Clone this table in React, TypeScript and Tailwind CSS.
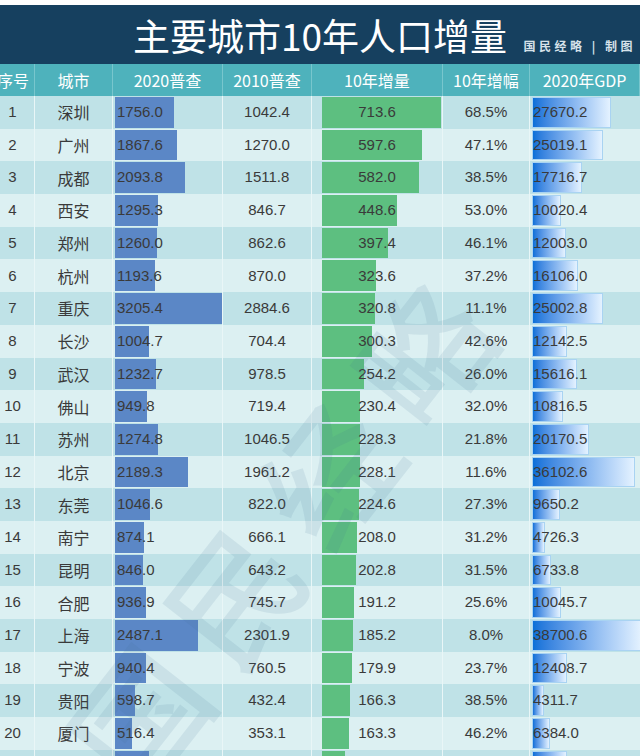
import React from "react";

type Row = {
  no: number;
  city: string;
  pop2020: string;
  pop2010: string;
  inc: string;
  rate: string;
  gdp: string;
};

const rows: Row[] = [
  { no: 1, city: "深圳", pop2020: "1756.0", pop2010: "1042.4", inc: "713.6", rate: "68.5%", gdp: "27670.2" },
  { no: 2, city: "广州", pop2020: "1867.6", pop2010: "1270.0", inc: "597.6", rate: "47.1%", gdp: "25019.1" },
  { no: 3, city: "成都", pop2020: "2093.8", pop2010: "1511.8", inc: "582.0", rate: "38.5%", gdp: "17716.7" },
  { no: 4, city: "西安", pop2020: "1295.3", pop2010: "846.7", inc: "448.6", rate: "53.0%", gdp: "10020.4" },
  { no: 5, city: "郑州", pop2020: "1260.0", pop2010: "862.6", inc: "397.4", rate: "46.1%", gdp: "12003.0" },
  { no: 6, city: "杭州", pop2020: "1193.6", pop2010: "870.0", inc: "323.6", rate: "37.2%", gdp: "16106.0" },
  { no: 7, city: "重庆", pop2020: "3205.4", pop2010: "2884.6", inc: "320.8", rate: "11.1%", gdp: "25002.8" },
  { no: 8, city: "长沙", pop2020: "1004.7", pop2010: "704.4", inc: "300.3", rate: "42.6%", gdp: "12142.5" },
  { no: 9, city: "武汉", pop2020: "1232.7", pop2010: "978.5", inc: "254.2", rate: "26.0%", gdp: "15616.1" },
  { no: 10, city: "佛山", pop2020: "949.8", pop2010: "719.4", inc: "230.4", rate: "32.0%", gdp: "10816.5" },
  { no: 11, city: "苏州", pop2020: "1274.8", pop2010: "1046.5", inc: "228.3", rate: "21.8%", gdp: "20170.5" },
  { no: 12, city: "北京", pop2020: "2189.3", pop2010: "1961.2", inc: "228.1", rate: "11.6%", gdp: "36102.6" },
  { no: 13, city: "东莞", pop2020: "1046.6", pop2010: "822.0", inc: "224.6", rate: "27.3%", gdp: "9650.2" },
  { no: 14, city: "南宁", pop2020: "874.1", pop2010: "666.1", inc: "208.0", rate: "31.2%", gdp: "4726.3" },
  { no: 15, city: "昆明", pop2020: "846.0", pop2010: "643.2", inc: "202.8", rate: "31.5%", gdp: "6733.8" },
  { no: 16, city: "合肥", pop2020: "936.9", pop2010: "745.7", inc: "191.2", rate: "25.6%", gdp: "10045.7" },
  { no: 17, city: "上海", pop2020: "2487.1", pop2010: "2301.9", inc: "185.2", rate: "8.0%", gdp: "38700.6" },
  { no: 18, city: "宁波", pop2020: "940.4", pop2010: "760.5", inc: "179.9", rate: "23.7%", gdp: "12408.7" },
  { no: 19, city: "贵阳", pop2020: "598.7", pop2010: "432.4", inc: "166.3", rate: "38.5%", gdp: "4311.7" },
  { no: 20, city: "厦门", pop2020: "516.4", pop2010: "353.1", inc: "163.3", rate: "46.2%", gdp: "6384.0" },
  { no: 21, city: "青岛", pop2020: "1007.2", pop2010: "871.5", inc: "135.7", rate: "15.6%", gdp: "12400.6" },
];

const cols = "grid grid-cols-[35px_78px_110px_89px_131px_87px_110px]";
const num = "font-['Liberation_Sans',Arial,sans-serif] text-[15px] text-[#3a3a3a]";
const cjk = "font-['Noto_Sans_CJK_SC','Noto_Sans',sans-serif]";
const divider = "border-r border-[#e9f6f7]";

export default function App() {
  return (
    <div className="relative w-[640px] h-[756px] overflow-hidden bg-white">
      <div className="h-[5px]" />

      {/* 标题 */}
      <div className="h-[59px] bg-[#16405f] grid grid-cols-[1fr_auto_1fr] items-center">
        <div />
        <h1 className={`${cjk} text-[37px] font-normal text-white leading-none pt-[1px]`}>
          主要城市10年人口增量
        </h1>
        <div className="flex justify-end self-end pb-[9px] pr-[4px]">
          <span className={`${cjk} text-[12px] font-bold text-[#d6e2ea] tracking-[3.5px]`}>
            国民经略 | 制图
          </span>
        </div>
      </div>

      {/* 表头 */}
      <div className={`${cols} h-[32px] bg-[#4eb2bc] ${cjk} text-[16px] text-white`}>
        {["序号", "城市", "2020普查", "2010普查", "10年增量", "10年增幅", "2020年GDP"].map((h, i) => (
          <div
            key={h}
            className={`flex items-center justify-center border-r border-[#78c6cd] ${i === 0 ? "pr-[8px] whitespace-nowrap" : ""}`}
          >
            {h}
          </div>
        ))}
      </div>

      {/* 数据行 */}
      {rows.map((r, i) => (
        <div
          key={r.no}
          className={`${cols} h-[32.7px] ${i % 2 === 0 ? "bg-[#bfe2e7]" : "bg-[#dcf0f2]"}`}
        >
          <div className={`flex items-center justify-center pr-[9px] ${num} ${divider}`}>{r.no}</div>
          <div className={`flex items-center justify-center ${cjk} text-[16px] text-[#3a3a3a] ${divider}`}>
            {r.city}
          </div>
          <div className={`relative flex py-[1px] pl-[2px] ${divider}`}>
            <div className="bg-[#5b87c6]" style={{ width: parseFloat(r.pop2020) * 0.0334 }} />
            <span className={`absolute inset-y-0 left-[4px] flex items-center ${num}`}>{r.pop2020}</span>
          </div>
          <div className={`flex items-center justify-center ${num} ${divider}`}>{r.pop2010}</div>
          <div className={`relative flex py-[1px] pl-[10px] ${divider}`}>
            <div className="bg-[#5dbf80]" style={{ width: parseFloat(r.inc) * 0.1667 }} />
            <span className={`absolute inset-0 flex items-center justify-center ${num}`}>{r.inc}</span>
          </div>
          <div className={`flex items-center justify-center ${num} ${divider}`}>{r.rate}</div>
          <div className="relative flex py-[1px] pl-[2px]">
            <div
              className="shrink-0 border border-[#a9d3f2] bg-gradient-to-r from-[#0770d8] to-[#e4f2ff]"
              style={{ width: parseFloat(r.gdp) * 0.00285 }}
            />
            <span className={`absolute inset-y-0 left-[3px] flex items-center ${num}`}>{r.gdp}</span>
          </div>
        </div>
      ))}

      {/* 水印 */}
      <div
        aria-hidden
        className={`pointer-events-none absolute left-[95px] top-[700px] origin-left -rotate-[52deg] ${cjk} font-medium text-[130px] leading-none text-[#3f6f96]/[0.11] tracking-[24px] whitespace-nowrap`}
      >
        国民经略
      </div>
    </div>
  );
}
